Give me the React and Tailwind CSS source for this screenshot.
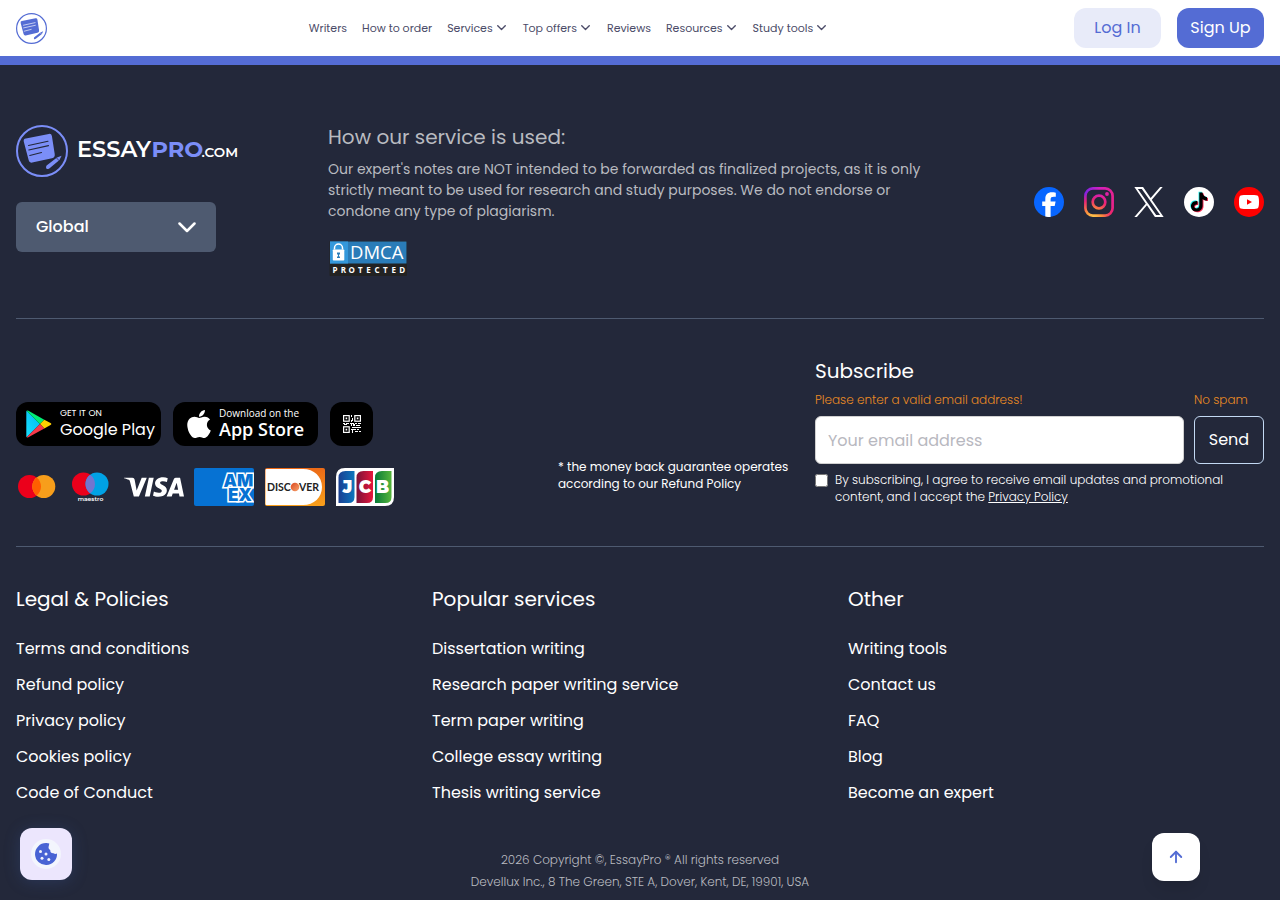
import React from "react";
import { FaApple } from "react-icons/fa";
import { SiVisa } from "react-icons/si";
import { ArrowUp } from "lucide-react";

const navItems = [
  { label: "Writers" },
  { label: "How to order" },
  { label: "Services", menu: true },
  { label: "Top offers", menu: true },
  { label: "Reviews" },
  { label: "Resources", menu: true },
  { label: "Study tools", menu: true },
];

const linkColumns = [
  {
    title: "Legal & Policies",
    links: ["Terms and conditions", "Refund policy", "Privacy policy", "Cookies policy", "Code of Conduct"],
  },
  {
    title: "Popular services",
    links: ["Dissertation writing", "Research paper writing service", "Term paper writing", "College essay writing", "Thesis writing service"],
  },
  {
    title: "Other",
    links: ["Writing tools", "Contact us", "FAQ", "Blog", "Become an expert"],
  },
];

function Chevron({ className, width }) {
  return (
    <svg viewBox="0 0 18 11" className={className} fill="none" stroke="currentColor" strokeWidth={width} strokeLinecap="round" strokeLinejoin="round" aria-hidden="true">
      <path d="M1.5 1.5 9 9l7.5-7.5" />
    </svg>
  );
}

function Mark({ className, ink, paper }) {
  return (
    <svg viewBox="0 0 52 52" className={className} aria-hidden="true">
      <circle cx="26" cy="26" r="25" fill="none" stroke={ink} strokeWidth="2" />
      <path d="M9.900 13.600 32.800 8.900a2.600 2.600 0 0 1 3.100 2L38.700 29q.6 3.400-2.700 4.200L16.200 37.600a3 3 0 0 1-3.500-2.300L7.800 16.700a2.500 2.500 0 0 1 2.100-3.100Z" fill={ink} />
      <path d="M12.500 20.500 32 16.200M12.800 25 32.500 20.600M13.800 30.500 25.500 27.500" fill="none" stroke={paper} strokeWidth="1.100" strokeLinecap="round" />
      <path d="M30.600 40.600 41 32.600l4.600-1.800-2.100 4.300-10.200 8.300q-2.800 1.200-3.200-.4-.3-1.200.5-2.400Z" fill={ink} />
      <path d="m40.600 33 2.500 2.700" stroke={paper} strokeWidth=".7" />
    </svg>
  );
}

function Wordmark() {
  return (
    <svg viewBox="0 0 168 40" className="h-10 w-[168px]" role="img" aria-label="EssayPro.com" fontFamily="Montserrat, Inter, sans-serif">
      <text x="0" y="25.500" fontSize="22.500" fontWeight="600" fill="#fff">ESSAY</text>
      <text x="74.500" y="25.500" fontSize="22.500" fontWeight="700" fill="#7b8ef8">PRO</text>
      <text x="124.500" y="25.500" fontSize="13.500" fontWeight="600" fill="#fff">.COM</text>
    </svg>
  );
}

function Dmca() {
  return (
    <svg viewBox="0 0 80 38" className="block h-[38px] w-20" role="img" aria-label="DMCA protected">
      <rect x="1.500" y="1" width="77.500" height="35" rx="1" fill="#222" />
      <rect x="2" y="1.500" width="76.500" height="22" fill="#2a7cb8" />
      <rect x="2" y="1.500" width="18" height="22" fill="#3498db" />
      <path d="M6.500 9.500V8a4 4 0 0 1 8 0v1.500" fill="none" stroke="#fff" strokeWidth="1.500" />
      <rect x="4.800" y="9.500" width="11.500" height="11" rx=".8" fill="#fff" />
      <path d="M9 12.500h3v2h-1v2h1V18H9v-1.500h1v-2H9Z" fill="#2a7cb8" />
      <text x="22" y="19" fontFamily="Open Sans, sans-serif" fontSize="18.500" fill="#fff">DMCA</text>
      <g fontFamily="Open Sans, sans-serif" fontWeight="700" fontSize="8" fill="#fff" textAnchor="middle">
        {"PROTECTED".split("").map((c, i) => (
          <text key={i} x={7 + i * 8.4} y="33">{c}</text>
        ))}
      </g>
    </svg>
  );
}

function Facebook() {
  return (
    <svg viewBox="0 0 30 30" className="size-[30px]" aria-hidden="true">
      <circle cx="15" cy="15" r="15" fill="#0866ff" />
      <path d="M11.300 29.500V19H8.200v-4.500h3.100v-2.300c0-4.700 2.200-6.900 6.700-6.900 1 0 2.400.1 3.800.4v4.100c-4.100-.3-5.200.2-5.200 2.700v2h5l-.9 4.500h-4.100v10.900q-2.600.4-5.300-.4Z" fill="#fff" />
    </svg>
  );
}

function Instagram() {
  return (
    <svg viewBox="0 0 30 30" className="size-[30px]" aria-hidden="true">
      <defs>
        <linearGradient id="ig-base" x1="0" y1="0" x2="1" y2="0.15">
          <stop offset="0" stopColor="#7024e8" />
          <stop offset=".5" stopColor="#d31fc0" />
          <stop offset="1" stopColor="#e6238f" />
        </linearGradient>
        <radialGradient id="ig-warm" cx=".3" cy="1.050" r=".9">
          <stop offset="0" stopColor="#ffd34f" />
          <stop offset=".35" stopColor="#fa8a3c" />
          <stop offset=".7" stopColor="#f0256a" stopOpacity=".9" />
          <stop offset="1" stopColor="#e0208a" stopOpacity="0" />
        </radialGradient>
        <mask id="ig-mask">
          <rect x="1.400" y="1.400" width="27.200" height="27.200" rx="7.500" fill="none" stroke="#fff" strokeWidth="2.700" />
          <circle cx="15" cy="15" r="6.300" fill="none" stroke="#fff" strokeWidth="2.700" />
          <circle cx="23" cy="7" r="1.900" fill="#fff" />
        </mask>
      </defs>
      <g mask="url(#ig-mask)">
        <rect width="30" height="30" fill="url(#ig-base)" />
        <rect width="30" height="30" fill="url(#ig-warm)" />
      </g>
    </svg>
  );
}

function XLogo() {
  return (
    <svg viewBox="0 0 1200 1227" className="size-[30px]" aria-hidden="true">
      <path fill="#fff" d="M714.163 519.284 1160.890 0h-105.860L667.137 450.887 357.328 0H0l468.492 681.821L0 1226.370h105.866l409.625-476.152 327.181 476.152H1200L714.137 519.284h.026ZM569.165 687.828l-47.468-67.894-377.686-540.240h162.604l304.797 435.991 47.468 67.894 396.200 566.721H892.476L569.165 687.854v-.026Z" />
    </svg>
  );
}

function TikTok() {
  const note = "M15.300 5.500h3.200c.3 2.800 2 4.400 4.600 4.700v3.200c-1.700 0-3.200-.5-4.500-1.500v6.600c0 7-9.800 8.200-11.400 2.200-1.100-4.100 2.300-7.200 6.200-6.600v3.400c-2-.5-3.400.6-3.200 2.300.3 2.300 5.100 2.700 5.100-1.600Z";
  return (
    <svg viewBox="0 0 30 30" className="size-[30px]" aria-hidden="true">
      <circle cx="15" cy="15" r="15" fill="#fff" />
      <path d={note} fill="#25f4ee" transform="translate(-.8 -.7)" />
      <path d={note} fill="#fe2c55" transform="translate(.9 .7)" />
      <path d={note} fill="#000" />
    </svg>
  );
}

function YouTube() {
  return (
    <svg viewBox="0 0 30 30" className="size-[30px]" aria-hidden="true">
      <circle cx="15" cy="15" r="15" fill="red" />
      <path d="M15 8c4 0 7 .1 8.200.5 1.400.4 1.800 2.500 1.800 6.500s-.4 6.100-1.800 6.500C22 21.900 19 22 15 22s-7-.1-8.200-.5C5.400 21.100 5 19 5 15s.4-6.100 1.800-6.500C8 8.100 11 8 15 8Z" fill="#fff" />
      <path d="m13 12.200 5 2.800-5 2.800Z" fill="red" />
    </svg>
  );
}

const socials = [
  { name: "Facebook", Icon: Facebook },
  { name: "Instagram", Icon: Instagram },
  { name: "X", Icon: XLogo },
  { name: "TikTok", Icon: TikTok },
  { name: "YouTube", Icon: YouTube },
];

function GooglePlay() {
  return (
    <svg viewBox="0 0 26 28" className="h-7 w-[26px] shrink-0" aria-hidden="true">
      <defs>
        <linearGradient id="gp" x1="1" y1="0" x2="0" y2="1">
          <stop offset="0" stopColor="#00b8f0" />
          <stop offset="1" stopColor="#18e0ff" />
        </linearGradient>
      </defs>
      <path d="M.6.800Q.3 1.200.3 2v24q0 .8.400 1.200L14 14Z" fill="url(#gp)" />
      <path d="M.6.800Q1.300.100 2.400.700L18.300 9.700 14 14Z" fill="#00ee76" />
      <path d="M18.300 9.700 24.500 13q1.600 1 0 2l-6.200 3.400L14 14Z" fill="#ffd000" />
      <path d="M.7 27.200q.7.700 1.700.1l15.900-8.900L14 14Z" fill="#f6384a" />
    </svg>
  );
}

function QrCode() {
  return (
    <svg viewBox="0 0 18 18" className="size-[18px]" aria-hidden="true">
      <g fill="none" stroke="#fff" strokeWidth="1.200">
        <rect x=".6" y=".6" width="5.600" height="5.600" />
        <rect x="11.800" y=".6" width="5.600" height="5.600" />
        <rect x=".6" y="11.800" width="5.600" height="5.600" />
      </g>
      <g fill="#fff">
        <path d="M2.600 2.600h1.600v1.600H2.600zM13.800 2.600h1.600v1.600h-1.600zM2.600 13.800h1.600v1.600H2.600z" />
        <path d="M8 0h1v2H8zM9 3h1v3H9zM8 5h1v2H8zM0 8h2v1H0zM3 8h3v1H3zM1 9h3v1H1zM7 8h4v1H7zM12 8h2v1h-2zM15 8h3v1h-3zM8 9h1v2H8zM10 9h2v2h-2zM13 10h4v1h-4zM9 12h9v1H9zM8 14h5v1H8zM14 14h2v1h-2zM9 15h1v3H9zM12 16h3v1h-3zM16 16h2v1h-2z" />
      </g>
    </svg>
  );
}

function Mastercard() {
  return (
    <svg viewBox="0 0 60 38" className="h-[38px] w-[60px]" role="img" aria-label="Mastercard">
      <circle cx="13.500" cy="18.500" r="11.500" fill="#eb001b" />
      <circle cx="27.800" cy="18.500" r="11.500" fill="#f79e1b" />
      <path d="M20.650 9.500a11.500 11.500 0 0 1 0 18 11.500 11.500 0 0 1 0-18Z" fill="#ff5f00" />
    </svg>
  );
}

function Maestro() {
  return (
    <svg viewBox="0 0 40 38" className="h-[38px] w-10" role="img" aria-label="Maestro">
      <circle cx="12.500" cy="16" r="11.500" fill="#eb001b" />
      <circle cx="26" cy="16" r="11.500" fill="#00a2e5" />
      <path d="M19.250 6.700a11.500 11.500 0 0 1 0 18.600 11.500 11.500 0 0 1 0-18.600Z" fill="#7375cf" />
      <text x="19.500" y="33" fontFamily="Montserrat, sans-serif" fontWeight="600" fontSize="6" textAnchor="middle" fill="#fff">maestro</text>
    </svg>
  );
}

function Amex() {
  return (
    <svg viewBox="0 0 60 38" className="h-[38px] w-[60px]" role="img" aria-label="American Express">
      <defs>
        <clipPath id="amex-card"><rect width="60" height="38" rx="2" /></clipPath>
      </defs>
      <g clipPath="url(#amex-card)">
        <rect width="60" height="38" fill="#0672d3" />
        <g fontFamily="Inter, Liberation Sans, sans-serif" fontWeight="900" fontSize="17" fill="#0672d3" stroke="#fff" strokeWidth="3.200" paintOrder="stroke" strokeLinejoin="miter">
          <text x="29.500" y="18.500">AM</text>
          <text x="34" y="33">EX</text>
        </g>
      </g>
    </svg>
  );
}

function Discover() {
  return (
    <svg viewBox="0 0 60 38" className="h-[38px] w-[60px]" role="img" aria-label="Discover">
      <defs>
        <linearGradient id="disc-bg" x1="0" y1="0" x2="0" y2="1">
          <stop offset="0" stopColor="#ec6a17" />
          <stop offset="1" stopColor="#f9a01b" />
        </linearGradient>
        <linearGradient id="disc-o" x1="0" y1="0" x2="1" y2="1">
          <stop offset="0" stopColor="#d9471e" />
          <stop offset="1" stopColor="#f8a56f" />
        </linearGradient>
      </defs>
      <rect width="60" height="38" rx="2" fill="url(#disc-bg)" />
      <path d="M1.500 1H38c11 0 19 7.500 19 18s-8 18-19 18H1.500a1 1 0 0 1-1-1V2a1 1 0 0 1 1-1Z" fill="#fff" />
      <g fontFamily="Lato, sans-serif" fontWeight="700" fontSize="10.500" fill="#222">
        <text x="2" y="22.800">DISC</text>
        <text x="34" y="22.800">VER</text>
      </g>
      <circle cx="30" cy="19" r="4.300" fill="url(#disc-o)" />
    </svg>
  );
}

function Jcb() {
  return (
    <svg viewBox="0 0 58 38" className="h-[38px] w-[58px]" role="img" aria-label="JCB">
      <defs>
        <linearGradient id="jcb-b"><stop offset="0" stopColor="#1b3f92" /><stop offset="1" stopColor="#0b76bd" /></linearGradient>
        <linearGradient id="jcb-r"><stop offset="0" stopColor="#7a1238" /><stop offset="1" stopColor="#e6173d" /></linearGradient>
        <linearGradient id="jcb-g"><stop offset="0" stopColor="#087a38" /><stop offset="1" stopColor="#55b53b" /></linearGradient>
      </defs>
      <path d="M9 0h49v29q0 9-9 9H0V9q0-9 9-9Z" fill="#fff" />
      <path d="M9.500 3H18.500v26q0 6-6 6H2.500V9.500Q2.500 3 9.500 3Z" fill="url(#jcb-b)" />
      <path d="M27.500 3H37v26q0 6-6 6H20.500V9.500Q20.500 3 27.500 3Z" fill="url(#jcb-r)" />
      <path d="M46 3h9.500v26q0 6-6 6H39V9.500Q39 3 46 3Z" fill="url(#jcb-g)" />
      <g fontFamily="Montserrat, Inter, sans-serif" fontWeight="900" fontSize="17" fill="#fff" textAnchor="middle">
        <text x="11.500" y="25">J</text>
        <text x="29" y="25">C</text>
        <text x="46.500" y="25">B</text>
      </g>
    </svg>
  );
}

function Cookie() {
  return (
    <svg viewBox="0 0 30 30" className="size-[30px]" aria-hidden="true">
      <circle cx="15" cy="15" r="15" fill="#f3f5fd" />
      <path d="M15 4.100A11 11 0 1 0 26 14.500q-1.800 1-3.500-.3-3.300.2-3.300-3.300-2.500-1.300-1.300-4.400l.4-1.900Q16.800 4 15 4.100Z" fill="#4863d4" />
      <g fill="#f3f5fd">
        <circle cx="9.500" cy="12.500" r="1.500" />
        <circle cx="15" cy="15" r="1.500" />
        <circle cx="11" cy="19.200" r="1.500" />
        <circle cx="17.800" cy="20.500" r="1.500" />
      </g>
    </svg>
  );
}

export default function App() {
  return (
    <div className="min-h-screen bg-[#23283a] font-[Poppins,Inter,sans-serif] text-white">
      <header className="flex h-14 items-center justify-between bg-white px-4">
        <a href="#home" aria-label="EssayPro home">
          <Mark className="size-[31px]" ink="#546cd4" paper="#ffffff" />
        </a>
        <nav className="flex items-center gap-[15px] pl-4 text-[11px] text-[#4b4b68]" aria-label="Main">
          {navItems.map((item) =>
            item.menu ? (
              <button key={item.label} type="button" className="flex items-center gap-1 pr-0.5">
                {item.label}
                <Chevron className="w-[9px]" width="2.800" />
              </button>
            ) : (
              <a key={item.label} href="#nav">{item.label}</a>
            )
          )}
        </nav>
        <div className="flex gap-4">
          <button type="button" className="h-10 w-[87px] rounded-xl bg-[#e8ebf9] text-[16px] text-[#546cd4]">Log In</button>
          <button type="button" className="h-10 w-[87px] rounded-xl bg-[#546cd4] text-[16px] text-white">Sign Up</button>
        </div>
      </header>
      <div className="h-[9px] bg-[#546cd4]" />

      <footer className="px-4 pt-[60px]">
        <section className="grid grid-cols-4 pb-10">
          <div className="flex flex-col gap-[25px]">
            <a href="#home" className="flex items-center gap-[9px]">
              <Mark className="size-[52px]" ink="#7b8ef8" paper="#23283a" />
              <Wordmark />
            </a>
            <button type="button" className="flex h-[50px] w-[200px] items-center justify-between rounded-md bg-[#4e5a70] px-5 text-[16px] font-medium">
              Global
              <Chevron className="w-[18px]" width="2.500" />
            </button>
          </div>
          <div className="col-span-2 text-[#b9bbc0]">
            <h2 className="text-[20px] leading-6">How our service is used:</h2>
            <p className="mt-[10px] max-w-[600px] text-[14px] leading-[21px]">
              Our expert's notes are NOT intended to be forwarded as finalized projects, as it is only strictly meant to be used for research and study purposes. We do not endorse or condone any type of plagiarism.
            </p>
            <a href="#dmca" className="mt-[18px] block w-20"><Dmca /></a>
          </div>
          <div className="flex items-center justify-end gap-5">
            {socials.map(({ name, Icon }) => (
              <a key={name} href="#social" aria-label={name}><Icon /></a>
            ))}
          </div>
        </section>

        <section className="flex items-end border-y border-[#4e5a70] py-10">
          <div className="flex shrink-0 flex-col gap-[22px]">
            <div className="flex gap-3">
              <a href="#android" className="flex h-11 w-[145px] items-center gap-2 rounded-xl bg-black pl-[10px]">
                <GooglePlay />
                <span className="flex flex-col whitespace-nowrap">
                  <span className="text-[9px] leading-[11px]">GET IT ON</span>
                  <span className="text-[16px] leading-[21px]">Google Play</span>
                </span>
              </a>
              <a href="#ios" className="flex h-11 w-[145px] items-center gap-2 rounded-xl bg-black pl-[14px] font-[Open_Sans,sans-serif]">
                <FaApple className="h-8 w-6 shrink-0" />
                <span className="flex flex-col whitespace-nowrap">
                  <span className="text-[10px] leading-[11px]">Download on the</span>
                  <span className="text-[18px] leading-[21px] font-semibold">App Store</span>
                </span>
              </a>
              <a href="#qr" aria-label="QR code" className="flex h-11 w-[43px] items-center justify-center rounded-xl bg-black"><QrCode /></a>
            </div>
            <div className="flex items-center">
              <Mastercard />
              <span className="-ml-[5px]"><Maestro /></span>
              <SiVisa viewBox="0 4.4 24 15.2" className="mr-[10px] ml-[13px] h-[38px] w-[60px]" aria-label="Visa" />
              <span className="flex gap-[11px]"><Amex /><Discover /><Jcb /></span>
            </div>
          </div>
          <p className="mb-[14px] ml-auto w-[257px] text-[12px] leading-[17px]">
            * the money back guarantee operates<br />according to our Refund Policy
          </p>
          <form className="w-[449px] pb-px" onSubmit={(e) => e.preventDefault()}>
            <h2 className="text-[20px] leading-6">Subscribe</h2>
            <div className="mt-2 grid grid-cols-[1fr_70px] gap-x-[10px] gap-y-2">
              <label htmlFor="email" className="text-[12px] leading-[17px] font-light text-[#e98a24]">Please enter a valid email address!</label>
              <span className="text-[12px] leading-[17px] font-light text-[#e98a24]">No spam</span>
              <input id="email" type="email" placeholder="Your email address" className="h-12 min-w-0 rounded-md border border-[#d0d0d0] bg-white px-3 text-[16px] text-black placeholder:text-[#b8b8c0]" />
              <button type="submit" className="h-12 rounded-md border border-[#c3d9f3] text-[16px]">Send</button>
            </div>
            <div className="mt-[7px] flex items-start gap-[7px]">
              <input id="agree" type="checkbox" className="mt-[3px] size-[13px] shrink-0" />
              <label htmlFor="agree" className="text-[12px] leading-[17px] font-light">
                By subscribing, I agree to receive email updates and promotional<br />content, and I accept the <a href="#privacy" className="underline">Privacy Policy</a>
              </label>
            </div>
          </form>
        </section>

        <section className="grid grid-cols-3 pt-10">
          {linkColumns.map((col) => (
            <div key={col.title}>
              <h2 className="text-[20px] leading-6">{col.title}</h2>
              <ul className="mt-[26px] flex flex-col gap-3 text-[16px] leading-6">
                {col.links.map((l) => (
                  <li key={l}><a href="#page">{l}</a></li>
                ))}
              </ul>
            </div>
          ))}
        </section>

        <p className="pt-11 pb-[7px] text-center text-[12px] leading-[22px] font-light text-[#b9bbc0]">
          2026 Copyright ©, EssayPro ® All rights reserved<br />Devellux Inc., 8 The Green, STE A, Dover, Kent, DE, 19901, USA
        </p>
      </footer>

      <button type="button" aria-label="Cookie settings" className="fixed bottom-5 left-5 flex size-[52px] items-center justify-center rounded-xl bg-[#ece6fd] shadow-[0_2px_16px_rgba(60,90,160,0.3)]">
        <Cookie />
      </button>
      <button type="button" aria-label="Back to top" className="fixed right-20 bottom-[19px] flex size-12 items-center justify-center rounded-xl bg-white text-[#546cd4] shadow-lg">
        <ArrowUp className="size-[18px]" strokeWidth={2.5} />
      </button>
    </div>
  );
}
